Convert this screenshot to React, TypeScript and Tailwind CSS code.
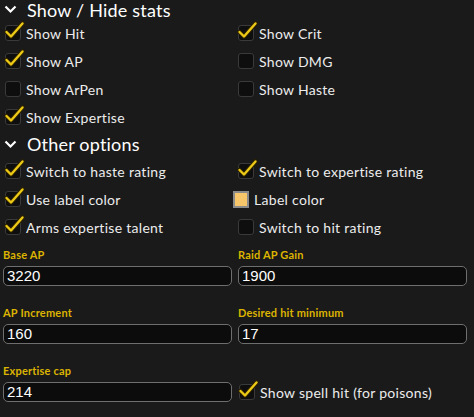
import React from "react";

const font = { fontFamily: "Lato, 'Open Sans', sans-serif" };

const Check = ({ checked }: { checked: boolean }) => (
  <div className="relative w-[16px] h-[16px] shrink-0">
    <div className="absolute inset-0 rounded-[3px] border border-[#3a3a3a] bg-[#0e0e0e]" />
    {checked && (
      <svg
        className="absolute left-[-1px] top-[-5px]"
        width="21"
        height="21"
        viewBox="0 0 21 21"
      >
        <path
          d="M2.5 12 L7 16.5 L18.5 3.5"
          fill="none"
          stroke="#2a2000"
          strokeWidth="4.5"
          strokeLinecap="round"
          strokeLinejoin="round"
        />
        <path
          d="M2.5 12 L7 16.5 L18.5 3.5"
          fill="none"
          stroke="#ecc916"
          strokeWidth="2.4"
          strokeLinecap="round"
          strokeLinejoin="round"
        />
      </svg>
    )}
  </div>
);

const CheckRow = ({ label, checked }: { label: string; checked: boolean }) => (
  <div className="flex items-center h-[28px] pl-[5px] gap-[5px]">
    <Check checked={checked} />
    <span className="text-[14px] text-[#ececec] tracking-[0.3px]">{label}</span>
  </div>
);

const Header = ({ title, h }: { title: string; h: string }) => (
  <div className={`flex items-center gap-[10px] pl-[4px] ${h}`}>
    <svg width="13" height="9" viewBox="0 0 13 9">
      <path
        d="M1.5 1.5 L6.5 6.5 L11.5 1.5"
        fill="none"
        stroke="#ffffff"
        strokeWidth="2.2"
      />
    </svg>
    <span className="text-[18px] text-white leading-none tracking-[0.2px]">{title}</span>
  </div>
);

const Field = ({ label, value }: { label: string; value: string }) => (
  <div className="flex flex-col">
    <div className="h-[14px] flex items-center text-[11px] font-bold text-[#dcb400] tracking-[0.2px]">
      {label}
    </div>
    <div
      className="mt-[4px] h-[20px] rounded-[5px] border border-[#6e6e6e] bg-[#0c0c0c] flex items-center pl-[3px] text-[15px] text-white"
      style={{ fontFamily: "'Liberation Sans', Arial, sans-serif" }}
    >
      {value}
    </div>
  </div>
);

export default function App() {
  return (
    <div className="w-[474px] h-[417px] bg-[#1a1a1a] overflow-hidden" style={font}>
      <Header title="Show / Hide stats" h="h-[19px]" />
      <div className="grid grid-cols-[233px_1fr]">
        <CheckRow label="Show Hit" checked />
        <CheckRow label="Show Crit" checked />
        <CheckRow label="Show AP" checked />
        <CheckRow label="Show DMG" checked={false} />
        <CheckRow label="Show ArPen" checked={false} />
        <CheckRow label="Show Haste" checked={false} />
        <CheckRow label="Show Expertise" checked />
        <div />
      </div>
      <Header title="Other options" h="h-[26px]" />
      <div className="grid grid-cols-[233px_1fr]">
        <CheckRow label="Switch to haste rating" checked />
        <CheckRow label="Switch to expertise rating" checked />
        <CheckRow label="Use label color" checked />
        <div className="flex items-center h-[28px] gap-[5px]">
          <div className="w-[16px] h-[17px] border-2 border-[#8a8a8a] bg-[#f7c56a]" />
          <span className="text-[14px] text-[#ececec] tracking-[0.3px]">Label color</span>
        </div>
        <CheckRow label="Arms expertise talent" checked />
        <CheckRow label="Switch to hit rating" checked={false} />
      </div>
      <div className="grid grid-cols-[229px_229px] gap-x-[6px] gap-y-[20px] pl-[3px] mt-[7px]">
        <Field label="Base AP" value="3220" />
        <Field label="Raid AP Gain" value="1900" />
        <Field label="AP Increment" value="160" />
        <Field label="Desired hit minimum" value="17" />
        <Field label="Expertise cap" value="214" />
        <div className="flex items-end">
          <div className="flex items-center h-[28px] gap-[5px] pl-[1px] mb-[-4px]">
            <Check checked />
            <span className="text-[14px] text-[#ececec] tracking-[0.3px]">
              Show spell hit (for poisons)
            </span>
          </div>
        </div>
      </div>
    </div>
  );
}
